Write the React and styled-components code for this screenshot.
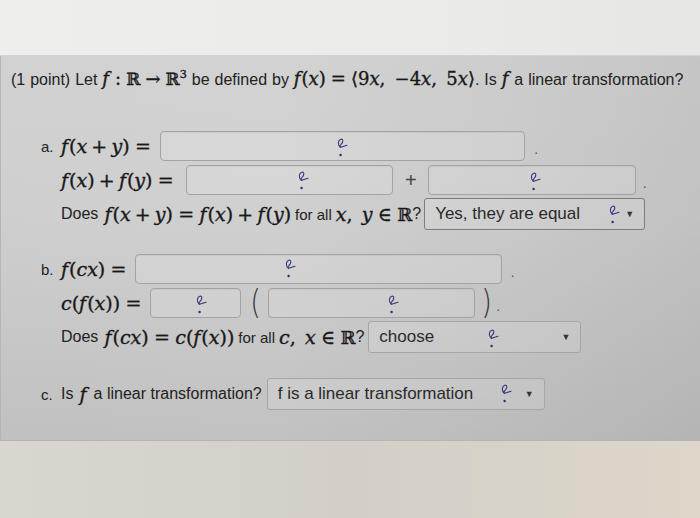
import React from "react";
import styled, { createGlobalStyle } from "styled-components";

const Global = createGlobalStyle`
  html, body { margin: 0; padding: 0; }
  body {
    width: 700px; height: 518px; overflow: hidden;
    font-family: "Liberation Sans", Arial, sans-serif;
    color: #222;
    background: #e2dfda;
  }
`;

const Page = styled.div`
  display: flex;
  flex-direction: column;
  height: 518px;
`;

const TopBand = styled.div`
  height: 55px;
  background: linear-gradient(90deg, #eeeeed 0%, #ebebea 60%, #e6e6e5 100%);
  border-bottom: 1px solid #d4d4d4;
`;

const Panel = styled.section`
  height: 385px;
  padding: 12px 0 0 2px;
  box-sizing: border-box;
  background:
    linear-gradient(180deg, rgba(255,255,255,0.06) 0%, rgba(0,0,0,0) 40%, rgba(0,0,0,0.07) 100%),
    linear-gradient(90deg, #cfcfcf 0%, #d0d0d0 40%, #c9c9c9 75%, #c2c2c2 100%);
  border-left: 1px solid #b5b5b5;
  border-bottom: 1px solid #b4b4b2;
  box-shadow: 0 1px 2px rgba(0,0,0,0.12);
`;

const BottomBand = styled.div`
  flex: 1;
  background: linear-gradient(90deg, #d9d6d0 0%, #d3cfc8 50%, #ddd6c9 100%);
`;

const Statement = styled.p`
  margin: 0 0 0 8px;
  height: 22px;
  font-size: 16px;
  line-height: 22px;
  word-spacing: 0.5px;
  white-space: nowrap;
`;

const Part = styled.div`
  margin-top: ${(p) => p.$gap}px;
  display: flex;
  flex-direction: column;
`;

const Row = styled.div`
  height: 34px;
  display: flex;
  align-items: center;
  padding-left: ${(p) => (p.$indent ? 58 : 38)}px;
  font-size: 16px;
  white-space: nowrap;
`;

const Label = styled.span`
  width: 20px;
  font-size: 15px;
`;

const Text = styled.span`
  font-size: ${(p) => p.$size || 16}px;
  margin: 0 ${(p) => p.$space || 0}px;
`;

const M = styled.span`
  font-family: "DejaVu Serif", serif;
  font-size: ${(p) => p.$size || 19}px;
  color: #181818;
  -webkit-text-stroke: 0.35px #181818;
  white-space: nowrap;
`;

const Mi = styled.i`
  font-style: italic;
  padding-right: ${(p) => (p.$f ? 1 : 0)}px;
`;

const Mo = styled.span`
  margin: 0 ${(p) => (p.$rel ? 0.28 : p.$bin ? 0.22 : 0)}em;
  margin-right: ${(p) => (p.$comma ? 0.17 : undefined)}em;
`;

const Bb = styled.span`
  font-family: "DejaVu Serif", serif;
  font-size: 0.95em;
`;

const Sup = styled.sup`
  font-size: 0.62em;
  vertical-align: 0.6em;
  line-height: 0;
`;

const Field = styled.span`
  position: relative;
  display: inline-block;
  box-sizing: border-box;
  width: ${(p) => p.$w}px;
  height: 30px;
  margin-left: ${(p) => p.$ml || 0}px;
  border: 1px solid #a3a3a3;
  border-radius: 4px;
  background: rgba(255, 255, 255, 0.13);
  box-shadow: inset 0 1px 1px rgba(0,0,0,0.05);
`;

const Select = styled.span`
  position: relative;
  display: inline-flex;
  align-items: center;
  box-sizing: border-box;
  width: ${(p) => p.$w}px;
  height: 32px;
  margin-left: ${(p) => p.$ml || 0}px;
  padding: 0 10px;
  border: 1px solid ${(p) => (p.$dark ? "#7c7c7c" : "#a6a6a6")};
  border-radius: 3px;
  background: rgba(255, 255, 255, 0.12);
  font-size: 17px;
  color: #2a2a2a;
`;

const Arrow = styled.span`
  margin-left: auto;
  font-size: 9px;
  color: #333;
`;

const Dot = styled.span`
  font-size: 14px;
  color: #555;
  margin-left: ${(p) => p.$ml || 8}px;
  transform: translateY(3px);
`;

const Plus = styled.span`
  font-size: 20px;
  font-weight: 300;
  color: #444;
  margin: 0 11px 0 12px;
`;

const BigParen = styled.span`
  font-family: "DejaVu Sans", sans-serif;
  font-size: 34px;
  font-weight: 200;
  line-height: 1;
  color: #333;
  margin: ${(p) => p.$m};
  transform: scaleX(0.8) translateY(-1px);
`;

const MarkSvg = styled.svg`
  position: absolute;
  top: ${(p) => p.$top ?? 5}px;
  left: ${(p) => p.$left}px;
  width: 13px;
  height: 22px;
  pointer-events: none;
`;

function Mark({ left, top }) {
  return (
    <MarkSvg $left={left} $top={top} viewBox="0 0 13 22">
      <path
        d="M4 11 C1.5 8.5 2 4 4.8 3.2 C7.2 2.6 7.6 6 5.2 8.2 C4.2 9.2 3.6 10.2 4.3 11.4 C6 11 8.5 9.8 11 9.2"
        fill="none"
        stroke="#34357a"
        strokeWidth="1.1"
        strokeLinecap="round"
      />
      <circle cx="4.6" cy="19" r="1.2" fill="#2e2f70" />
    </MarkSvg>
  );
}

const Fx = ({ v }) => (
  <>
    <Mi $f>f</Mi>(<Mi>{v}</Mi>)
  </>
);

export default function App() {
  return (
    <>
      <Global />
      <Page>
        <TopBand />
        <Panel>
          <Statement>
            (1 point) Let{" "}
            <M $size={18}>
              <Mi $f>f</Mi>
              <Mo $rel>:</Mo>
              <Bb>ℝ</Bb>
              <Mo $rel>→</Mo>
              <Bb>ℝ</Bb>
              <Sup>3</Sup>
            </M>{" "}
            be defined by{" "}
            <M $size={18}>
              <Fx v="x" />
              <Mo $rel>=</Mo>⟨9<Mi>x</Mi>,<Mo $comma> </Mo>−4<Mi>x</Mi>,<Mo $comma> </Mo>5<Mi>x</Mi>⟩
            </M>
            . Is{" "}
            <M $size={18}>
              <Mi $f>f</Mi>
            </M>{" "}
            a linear transformation?
          </Statement>

          <Part $gap={39}>
            <Row>
              <Label>a.</Label>
              <M>
                <Mi $f>f</Mi>(<Mi>x</Mi>
                <Mo $bin>+</Mo>
                <Mi>y</Mi>)<Mo $rel>=</Mo>
              </M>
              <Field $w={365} $ml={4}>
                <Mark left={175} top={4} />
              </Field>
              <Dot $ml={9}>.</Dot>
            </Row>
            <Row $indent>
              <M>
                <Fx v="x" />
                <Mo $bin>+</Mo>
                <Fx v="y" />
                <Mo $rel>=</Mo>
              </M>
              <Field $w={207} $ml={7}>
                <Mark left={110} top={3} />
              </Field>
              <Plus>+</Plus>
              <Field $w={208}>
                <Mark left={100} top={4} />
              </Field>
              <Dot $ml={7}>.</Dot>
            </Row>
            <Row $indent>
              <Text>Does</Text>
              <M>
                &nbsp;<Mi $f>f</Mi>(<Mi>x</Mi>
                <Mo $bin>+</Mo>
                <Mi>y</Mi>)<Mo $rel>=</Mo>
                <Fx v="x" />
                <Mo $bin>+</Mo>
                <Fx v="y" />
              </M>
              <Text $space={4} $size={15}>for all</Text>
              <M>
                <Mi>x</Mi>,<Mo $comma> </Mo>
                <Mi>y</Mi>
                <Mo $rel>∈</Mo>
                <Bb>ℝ</Bb>
              </M>
              <Text>?</Text>
              <Select $w={221} $ml={3} $dark>
                Yes, they are equal
                <Mark left={183} top={4} />
                <Arrow>▼</Arrow>
              </Select>
            </Row>
          </Part>

          <Part $gap={21}>
            <Row>
              <Label>b.</Label>
              <M>
                <Mi $f>f</Mi>(<Mi>c</Mi>
                <Mi>x</Mi>)<Mo $rel>=</Mo>
              </M>
              <Field $w={367} $ml={3}>
                <Mark left={148} top={2} />
              </Field>
              <Dot $ml={9}>.</Dot>
            </Row>
            <Row $indent>
              <M>
                <Mi>c</Mi>(<Fx v="x" />)<Mo $rel>=</Mo>
              </M>
              <Field $w={91} $ml={3}>
                <Mark left={44} top={4} />
              </Field>
              <BigParen $m="0 6px 0 8px">(</BigParen>
              <Field $w={207}>
                <Mark left={118} top={4} />
              </Field>
              <BigParen $m="0 0 0 5px">)</BigParen>
              <Dot $ml={3}>.</Dot>
            </Row>
            <Row $indent>
              <Text>Does</Text>
              <M>
                &nbsp;<Mi $f>f</Mi>(<Mi>c</Mi>
                <Mi>x</Mi>)<Mo $rel>=</Mo>
                <Mi>c</Mi>(<Fx v="x" />)
              </M>
              <Text $space={4} $size={15}>for all</Text>
              <M>
                <Mi>c</Mi>,<Mo $comma> </Mo>
                <Mi>x</Mi>
                <Mo $rel>∈</Mo>
                <Bb>ℝ</Bb>
              </M>
              <Text>?</Text>
              <Select $w={213} $ml={4}>
                choose
                <Mark left={118} top={5} />
                <Arrow>▼</Arrow>
              </Select>
            </Row>
          </Part>

          <Part $gap={23}>
            <Row>
              <Label>c.</Label>
              <Text>Is </Text>
              <M>
                &nbsp;<Mi $f>f</Mi>&nbsp;
              </M>
              <Text>a linear transformation?</Text>
              <Select $w={278} $ml={5}>
                f is a linear transformation
                <Mark left={232} top={3} />
                <Arrow>▼</Arrow>
              </Select>
            </Row>
          </Part>
        </Panel>
        <BottomBand />
      </Page>
    </>
  );
}
